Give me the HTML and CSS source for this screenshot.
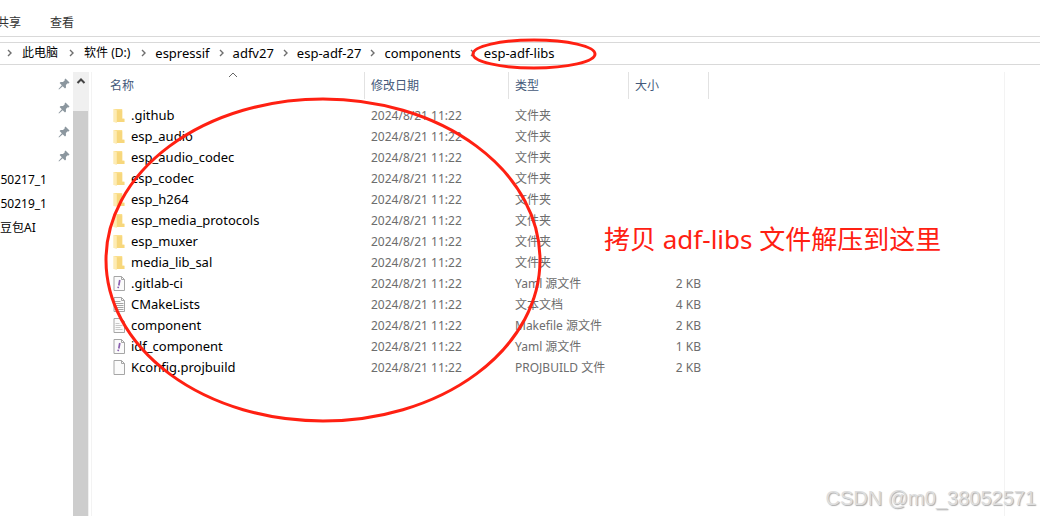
FILE: index.html
```html
<!DOCTYPE html>
<html lang="zh-CN">
<head>
<meta charset="utf-8">
<title>esp-adf-libs</title>
<link rel="stylesheet" href="styles.css">
</head>
<body>
<svg class="defs" aria-hidden="true">
  <defs>
    <symbol id="chev" viewBox="0 0 6 8"><path d="M1 1l3 3-3 3" fill="none" stroke="#6e6e6e" stroke-width="1.4"/></symbol>
    <symbol id="pin" viewBox="0 0 12 12"><path d="M7.500.5l4 4-.9.900-.9-.2L7.900 7l.1 2.400-1 1L4.700 8.200 1 11.500.5 11 3.800 7.300 1.600 5l1-1 2.400.1L6.800 2.300l-.2-.9z" fill="#8c979f"/></symbol>
    <symbol id="folder" viewBox="0 0 12 14"><path d="M1 1h8v9h2v3H1z" fill="#fbdf8c"/><path d="M1 1l3 1v12l-3-1z" fill="#fdebb5"/><path d="M4 2h5v8h2v3H4z" fill="#f7d77c"/></symbol>
    <symbol id="page" viewBox="0 0 13 15"><path d="M1.500.5h7.500l3 3v11H1.500z" fill="#fbfbfb" stroke="#a6a6a6"/><path d="M9 .5v3h3" fill="none" stroke="#a6a6a6"/></symbol>
    <symbol id="yaml" viewBox="0 0 13 15"><use href="#page"/><path d="M7.300 4L6.300 9.500M5.900 10.700l-.3 1.500" stroke="#8a5fb0" stroke-width="1.700"/></symbol>
    <symbol id="text" viewBox="0 0 13 15"><use href="#page"/><path d="M2 4.500h6M2 6.500h9M2 8.500h9M2 10.500h9M2 12.500h9" stroke="#a4a4a4"/></symbol>
    <symbol id="make" viewBox="0 0 13 15"><use href="#page"/><path d="M3 5.500h4M3 7.500h7M3 9.500h5M3 11.500h7" stroke="#c8c8c8"/></symbol>
  </defs>
</svg>
<div class="explorer">
  <nav class="tabs">
    <button class="tab">共享</button>
    <button class="tab">查看</button>
  </nav>
  <nav class="address">
    <svg class="chev"><use href="#chev"/></svg><a class="crumb drive" href="#">此电脑</a>
    <svg class="chev"><use href="#chev"/></svg><a class="crumb drive" href="#">软件 (D:)</a>
    <svg class="chev"><use href="#chev"/></svg><a class="crumb" href="#">espressif</a>
    <svg class="chev"><use href="#chev"/></svg><a class="crumb" href="#">adfv27</a>
    <svg class="chev"><use href="#chev"/></svg><a class="crumb" href="#">esp-adf-27</a>
    <svg class="chev"><use href="#chev"/></svg><a class="crumb" href="#">components</a>
    <svg class="chev"><use href="#chev"/></svg><a class="crumb" href="#">esp-adf-libs</a>
  </nav>
  <div class="panes">
    <ul class="tree">
      <li class="pinned"><svg class="pin"><use href="#pin"/></svg></li>
      <li class="pinned"><svg class="pin"><use href="#pin"/></svg></li>
      <li class="pinned"><svg class="pin"><use href="#pin"/></svg></li>
      <li class="pinned"><svg class="pin"><use href="#pin"/></svg></li>
      <li class="recent">250217_1</li>
      <li class="recent">250219_1</li>
      <li>豆包AI</li>
    </ul>
    <div class="scrollbar">
      <button class="scroll-up" aria-label="向上滚动"><svg width="10" height="8" viewBox="0 0 10 8"><path d="M1.500 6L5 2.500 8.500 6" fill="none" stroke="#444" stroke-width="2"/></svg></button>
      <div class="thumb"></div>
    </div>
    <main class="files">
      <table>
        <colgroup><col class="c-name"><col class="c-date"><col class="c-type"><col class="c-size"></colgroup>
        <thead>
          <tr>
            <th><button class="sort">名称</button><svg class="sorted" viewBox="0 0 10 6"><path d="M1 5l4-4 4 4" fill="none" stroke="#666"/></svg></th>
            <th><button class="sort">修改日期</button></th>
            <th><button class="sort">类型</button></th>
            <th><button class="sort">大小</button></th>
          </tr>
        </thead>
        <tbody>
          <tr><td><span class="name"><svg class="icon"><use href="#folder"/></svg>.github</span></td><td>2024/8/21 11:22</td><td>文件夹</td><td></td></tr>
          <tr><td><span class="name"><svg class="icon"><use href="#folder"/></svg>esp_audio</span></td><td>2024/8/21 11:22</td><td>文件夹</td><td></td></tr>
          <tr><td><span class="name"><svg class="icon"><use href="#folder"/></svg>esp_audio_codec</span></td><td>2024/8/21 11:22</td><td>文件夹</td><td></td></tr>
          <tr><td><span class="name"><svg class="icon"><use href="#folder"/></svg>esp_codec</span></td><td>2024/8/21 11:22</td><td>文件夹</td><td></td></tr>
          <tr><td><span class="name"><svg class="icon"><use href="#folder"/></svg>esp_h264</span></td><td>2024/8/21 11:22</td><td>文件夹</td><td></td></tr>
          <tr><td><span class="name"><svg class="icon"><use href="#folder"/></svg>esp_media_protocols</span></td><td>2024/8/21 11:22</td><td>文件夹</td><td></td></tr>
          <tr><td><span class="name"><svg class="icon"><use href="#folder"/></svg>esp_muxer</span></td><td>2024/8/21 11:22</td><td>文件夹</td><td></td></tr>
          <tr><td><span class="name"><svg class="icon"><use href="#folder"/></svg>media_lib_sal</span></td><td>2024/8/21 11:22</td><td>文件夹</td><td></td></tr>
          <tr><td><span class="name"><svg class="icon"><use href="#yaml"/></svg>.gitlab-ci</span></td><td>2024/8/21 11:22</td><td>Yaml 源文件</td><td>2 KB</td></tr>
          <tr><td><span class="name"><svg class="icon"><use href="#text"/></svg>CMakeLists</span></td><td>2024/8/21 11:22</td><td>文本文档</td><td>4 KB</td></tr>
          <tr><td><span class="name"><svg class="icon"><use href="#make"/></svg>component</span></td><td>2024/8/21 11:22</td><td>Makefile 源文件</td><td>2 KB</td></tr>
          <tr><td><span class="name"><svg class="icon"><use href="#yaml"/></svg>idf_component</span></td><td>2024/8/21 11:22</td><td>Yaml 源文件</td><td>1 KB</td></tr>
          <tr><td><span class="name"><svg class="icon"><use href="#page"/></svg>Kconfig.projbuild</span></td><td>2024/8/21 11:22</td><td>PROJBUILD 文件</td><td>2 KB</td></tr>
        </tbody>
      </table>
    </main>
    <div class="preview"></div>
  </div>
  <svg class="marks" aria-hidden="true">
    <ellipse cx="534" cy="54" rx="61" ry="14"/>
    <ellipse cx="323" cy="260" rx="217" ry="161"/>
  </svg>
  <p class="note">拷贝 adf-libs 文件解压到这里</p>
  <p class="watermark">CSDN @m0_38052571</p>
</div>
</body>
</html>
```
FILE: styles.css
```css
* { box-sizing: border-box; }
body {
  margin: 0;
  background: #fff;
  color: #000;
  font: 12px/20px "Noto Sans", "Noto Sans CJK SC", sans-serif;
}
button {
  padding: 0;
  border: 0;
  background: none;
  color: inherit;
  font: inherit;
}
.defs { position: absolute; width: 0; height: 0; }
.explorer {
  position: relative;
  display: flex;
  flex-direction: column;
  min-height: 100vh;
  overflow: hidden;
}
.tabs {
  display: flex;
  gap: 29px;
  height: 37px;
  padding-top: 9px;
  margin-left: -3px;
  border-bottom: 1px solid #d9d9d9;
  color: #333;
}
.address {
  display: flex;
  align-items: center;
  height: 23px;
  margin-top: 5px;
  padding: 0 0 2px 7px;
  border: solid #d9d9d9;
  border-width: 1px 0;
  font-size: 13px;
}
.crumb {
  margin: 0 9px 0 8px;
  color: inherit;
  text-decoration: none;
}
.drive { margin: 0 11px 0 9px; font-size: 12px; }
.chev { flex: none; width: 6px; height: 8px; }
.panes { display: flex; flex: 1; padding-top: 7px; }
.tree {
  width: 73px;
  margin: 0;
  padding: 0;
  list-style: none;
  overflow: hidden;
}
.tree li { height: 24px; line-height: 24px; }
.tree .pinned {
  display: flex;
  align-items: center;
  justify-content: flex-end;
  padding-right: 3px;
}
.tree .recent {
  display: flex;
  justify-content: flex-end;
  width: 47px;
  overflow: hidden;
}
.pin { width: 12px; height: 12px; }
.scrollbar {
  display: flex;
  flex-direction: column;
  width: 16px;
  padding-right: 1px;
  background: #f0f0f0;
}
.scroll-up { display: flex; justify-content: center; height: 39px; padding-top: 5px; }
.thumb { flex: 1; background: #cdcdcd; }
.files { flex: 1; margin-left: 2px; border-left: 1px solid #f3f3f3; }
.preview { width: 36px; border-left: 1px solid #f3f3f3; }
table { table-layout: fixed; width: 617px; border-collapse: separate; border-spacing: 0; }
.c-name { width: 273px; }
.c-date { width: 144px; }
.c-type { width: 120px; }
.c-size { width: 80px; }
th {
  position: relative;
  height: 27px;
  padding: 0 0 0 6px;
  border-right: 1px solid #e2e2e2;
  color: #44597a;
  font-weight: 400;
  text-align: left;
}
th:first-child { padding-left: 18px; }
.sorted { position: absolute; top: 0; left: 50%; width: 10px; height: 6px; }
td { height: 21px; padding: 0 0 0 6px; color: #6d6d6d; }
tbody::before { content: ""; display: block; height: 6px; }
td:first-child { padding-left: 20px; color: #000; }
td:last-child { padding-right: 8px; text-align: right; }
.name { display: flex; align-items: center; gap: 5px; font-size: 13px; line-height: 18px; padding-bottom: 1px; }
.icon { width: 14px; height: 15px; }
.marks {
  position: absolute;
  top: 0;
  left: 0;
  width: 100%;
  height: 100%;
  fill: none;
  stroke: #ff2012;
  stroke-width: 3px;
  pointer-events: none;
}
.note {
  position: absolute;
  top: 220px;
  left: 604px;
  margin: 0;
  color: #ff2012;
  font-size: 26px;
  line-height: 38px;
}
.watermark {
  position: absolute;
  right: 4px;
  bottom: 4px;
  margin: 0;
  color: #dedede;
  font: 20px/28px "Liberation Sans", Arial, sans-serif;
  text-shadow: 1px 1px 1px #aaa;
}
```
